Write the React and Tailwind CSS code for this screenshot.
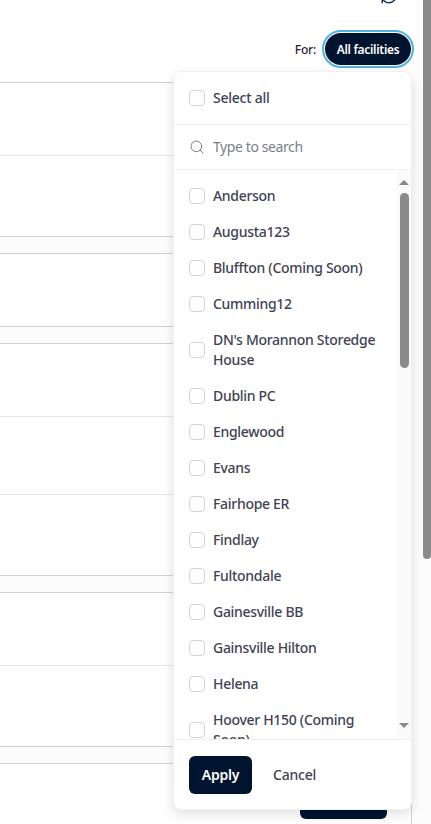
import React from 'react';
import { RefreshCw, Search } from 'lucide-react';

const facilities = [
  'Anderson',
  'Augusta123',
  'Bluffton (Coming Soon)',
  'Cumming12',
  "DN's Morannon Storedge House",
  'Dublin PC',
  'Englewood',
  'Evans',
  'Fairhope ER',
  'Findlay',
  'Fultondale',
  'Gainesville BB',
  'Gainsville Hilton',
  'Helena',
  'Hoover H150 (Coming Soon)',
];

// Row heights of the cards behind the dropdown
const cards = [
  ['h-[73px] border-b border-[#e6e6ea]', 'h-[80px]'],
  ['h-[72px]'],
  ['h-[73px] border-b border-[#e6e6ea]', 'h-[78px] border-b border-[#e6e6ea]', 'h-[80px]'],
  ['h-[73px] border-b border-[#e6e6ea]', 'h-[80px]'],
];

const Checkbox = () => (
  <span className="w-4 h-4 shrink-0 rounded-[4px] border border-[#d2d2da] bg-white" />
);

const FacilityDropdown = () => (
  <div className="absolute left-[173px] top-[71px] w-[239px] h-[739px] flex flex-col bg-white border border-[#f0f0f2] rounded-lg shadow-[0_4px_12px_rgba(0,0,0,0.12)] overflow-hidden tracking-[-0.2px]">
    <div className="h-[53px] shrink-0 flex items-center gap-2 pl-[15px] border-b border-[#f0f0f2]">
      <Checkbox />
      <span className="text-sm font-medium tracking-[-0.25px] text-[#3f4254]">Select all</span>
    </div>
    <div className="h-[45px] shrink-0 flex items-center gap-2 pl-[15px] border-b border-[#f0f0f2]">
      <Search size={16} strokeWidth={1.5} className="text-[#777b8a] shrink-0" />
      <span className="text-sm tracking-[-0.4px] text-[#7b7f8c]">Type to search</span>
    </div>
    <div className="relative flex-1 min-h-0 overflow-hidden">
      <div className="pt-2 pr-[14px]">
        {facilities.map((name) => (
          <div key={name} className="flex items-center gap-2 pl-[15px] pr-1 py-2">
            <Checkbox />
            <span className="text-sm leading-5 font-medium tracking-[-0.3px] text-[#3f4254]">{name}</span>
          </div>
        ))}
      </div>
      {/* Scrollbar */}
      <div className="absolute right-0 top-0 bottom-0 w-[14px] bg-[#fafafa]">
        <div className="absolute left-[2px] top-[10px] w-0 h-0 border-x-[5px] border-x-transparent border-b-[5px] border-b-[#8a8a8a]" />
        <div className="absolute left-[3px] top-[23px] w-[9px] h-[175px] rounded-full bg-[#8a8a8a]" />
        <div className="absolute left-[2px] top-[553px] w-0 h-0 border-x-[5px] border-x-transparent border-t-[5px] border-t-[#8a8a8a]" />
      </div>
    </div>
    <div className="h-[70px] shrink-0 flex items-center gap-[21px] pl-[15px] border-t border-[#f0f0f2]">
      <button className="w-[63px] h-[38px] rounded-md bg-[#00132f] text-sm font-semibold text-white">Apply</button>
      <button className="text-sm font-medium text-[#3f4254]">Cancel</button>
    </div>
  </div>
);

const App = () => {
  return (
    <div className="relative flex h-[824px] overflow-hidden bg-[#fcfcfc] font-['Noto_Sans',sans-serif]">
      <div className="w-[423px] shrink-0">
        <div className="h-[82px] flex flex-col bg-white">
          <div className="h-[33px] flex justify-end pr-[25px]">
            <RefreshCw size={18} className="-mt-[13px] text-[#1d3557]" />
          </div>
          <div className="flex justify-end items-center gap-[9px] pr-3">
            <span className="pt-[2px] text-xs font-medium tracking-[-0.2px] text-[#1f2033]">For:</span>
            <button className="w-[86px] h-[32px] pt-[2px] rounded-full bg-[#00132f] text-xs font-semibold tracking-[-0.3px] text-white outline-2 outline-offset-1 outline-[#4fb3e0]">
              All facilities
            </button>
          </div>
        </div>
        <div className="-ml-4 mr-[11px] flex flex-col gap-4">
          {cards.map((rows, i) => (
            <div key={i} className="bg-[#fefefe] border border-[#d0d0d8] rounded-lg">
              {rows.map((row, j) => (
                <div key={j} className={row} />
              ))}
            </div>
          ))}
          <div className="h-[120px] bg-[#fefefe] border border-[#d0d0d8] rounded-t-lg flex justify-end pr-6 pt-[26px]">
            <div className="w-[87px] h-[29px] rounded-md bg-[#00132f]" />
          </div>
        </div>
      </div>
      {/* Page scrollbar */}
      <div className="w-2 shrink-0">
        <div className="h-[559px] bg-[#8a8a8a] rounded-b-sm" />
      </div>
      <FacilityDropdown />
    </div>
  );
};

export default App;
